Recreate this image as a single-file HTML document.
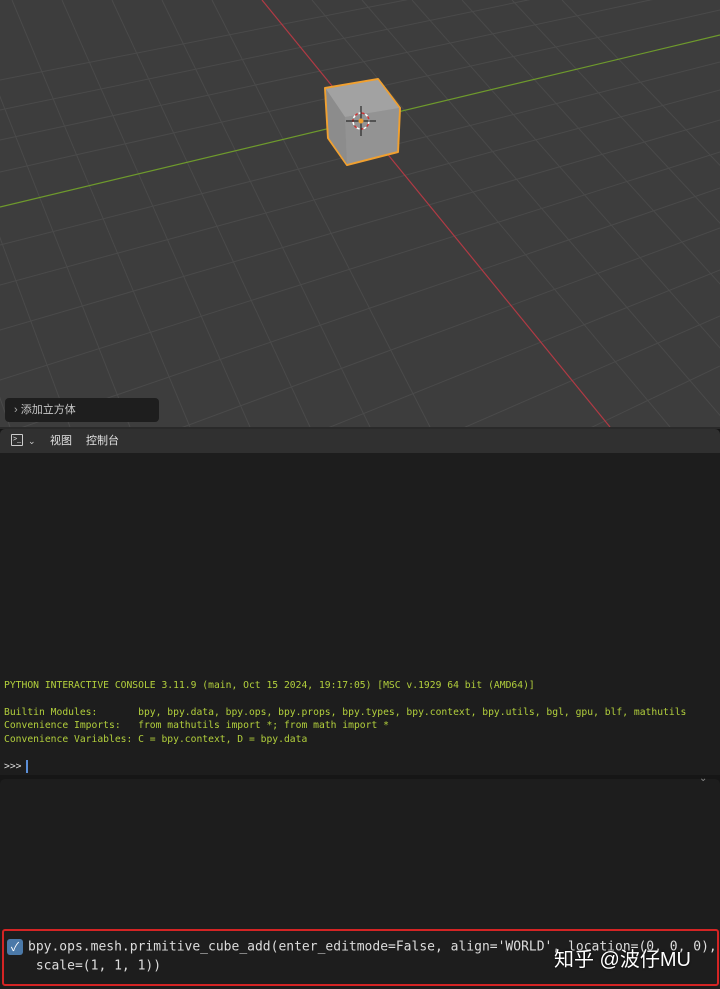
<!DOCTYPE html>
<html><head><meta charset="utf-8"><style>
body{margin:0;width:720px;height:989px;background:#161616;overflow:hidden;position:relative;font-family:"Liberation Sans","Noto Sans CJK SC",sans-serif}
.abs{position:absolute}
.mono{font-family:"DejaVu Sans Mono","Liberation Mono",monospace;font-size:9.7px;color:#b2cf3c;white-space:pre;position:absolute;left:4px}
</style></head><body>
<svg class="abs" style="left:0;top:0" width="720" height="427" viewBox="0 0 720 427">
<rect width="720" height="427" fill="#3d3d3d"/>
<g stroke="#4a4a4a" stroke-width="1">
<line x1="-138" y1="0" x2="10" y2="427"/><line x1="-38" y1="0" x2="130" y2="427"/>
<line x1="12" y1="0" x2="190" y2="427"/><line x1="62" y1="0" x2="250" y2="427"/>
<line x1="112" y1="0" x2="310" y2="427"/><line x1="162" y1="0" x2="370" y2="427"/>
<line x1="212" y1="0" x2="430" y2="427"/><line x1="312" y1="0" x2="670" y2="427"/>
<line x1="362" y1="0" x2="730" y2="427"/><line x1="412" y1="0" x2="790" y2="427"/>
<line x1="462" y1="0" x2="850" y2="427"/><line x1="512" y1="0" x2="910" y2="427"/>
<line x1="-88" y1="0" x2="70" y2="427"/><line x1="562" y1="0" x2="970" y2="427"/>
<line x1="0" y1="110" x2="720" y2="-40"/><line x1="0" y1="140" x2="720" y2="-15"/>
<line x1="0" y1="172" x2="720" y2="10"/><line x1="0" y1="245" x2="720" y2="62"/>
<line x1="0" y1="285" x2="720" y2="90"/><line x1="0" y1="330" x2="720" y2="120"/>
<line x1="0" y1="380" x2="720" y2="152"/><line x1="0" y1="435" x2="720" y2="188"/>
<line x1="0" y1="495" x2="720" y2="228"/><line x1="0" y1="560" x2="720" y2="270"/>
<line x1="0" y1="630" x2="720" y2="316"/><line x1="0" y1="710" x2="720" y2="366"/>
<line x1="0" y1="80" x2="720" y2="-62"/>
</g>
<line x1="262" y1="0" x2="610" y2="427" stroke="#b03a44" stroke-width="1.2"/>
<line x1="0" y1="207" x2="720" y2="35" stroke="#6e9a2c" stroke-width="1.2"/>
<path d="M325 88 L378 79 L400 108 L398 152 L347 165 L328 138 Z" fill="#9a9a9a" stroke="#f0a030" stroke-width="2" stroke-linejoin="round"/>
<path d="M326 89 L378 80 L399 108 L345 117 Z" fill="#a2a2a2"/>
<path d="M345 117 L399 108 L397 151 L347 164 Z" fill="#939393"/>
<path d="M326 89 L345 117 L347 164 L329 138 Z" fill="#8c8c8c"/>
<circle cx="361" cy="121" r="8" fill="none" stroke="#fff" stroke-width="1.5" stroke-dasharray="4 3"/>
<circle cx="361" cy="121" r="8" fill="none" stroke="#c33" stroke-width="1.5" stroke-dasharray="3 4" stroke-dashoffset="4"/>
<line x1="346" y1="121" x2="376" y2="121" stroke="#111"/><line x1="361" y1="106" x2="361" y2="136" stroke="#111"/>
<circle cx="361" cy="121" r="2.5" fill="#f0a030"/>
</svg>
<div class="abs" style="left:5px;top:398px;width:154px;height:24px;background:#1e1e1e;border-radius:4px;color:#c8c8c8;font-size:11px;line-height:24px"><span style="margin-left:9px;color:#aaa">›</span>&nbsp;添加立方体</div>
<div class="abs" style="left:0;top:427px;width:720px;height:2px;background:#2a2a2a"></div>
<div class="abs" style="left:0;top:429px;width:720px;height:24px;background:#303030;border-radius:5px 5px 0 0;color:#e0e0e0;font-size:11px;line-height:24px">
<span class="abs" style="left:11px;top:5px;width:12px;height:12px;border:1px solid #ccc;border-radius:1px;font-size:7px;line-height:10px;text-align:left;padding-left:1px;box-sizing:border-box">&gt;_</span>
<span class="abs" style="left:28px;top:0;font-size:9px;color:#ccc">⌄</span>
<span class="abs" style="left:50px">视图</span><span class="abs" style="left:86px">控制台</span></div>
<div class="abs" style="left:0;top:453px;width:720px;height:322px;background:#1d1d1d"></div>
<div class="mono" style="top:680px">PYTHON INTERACTIVE CONSOLE 3.11.9 (main, Oct 15 2024, 19:17:05) [MSC v.1929 64 bit (AMD64)]</div>
<div class="mono" style="top:707px">Builtin Modules:       bpy, bpy.data, bpy.ops, bpy.props, bpy.types, bpy.context, bpy.utils, bgl, gpu, blf, mathutils</div>
<div class="mono" style="top:720px">Convenience Imports:   from mathutils import *; from math import *</div>
<div class="mono" style="top:734px">Convenience Variables: C = bpy.context, D = bpy.data</div>
<div class="mono" style="top:761px;color:#ddd">&gt;&gt;&gt; </div>
<div class="abs" style="left:26px;top:760px;width:2px;height:13px;background:#5b8fd8"></div>
<div class="abs" style="left:0;top:779px;width:720px;height:210px;background:#1d1d1d;border-radius:5px 5px 0 0"></div>
<div class="abs" style="left:699px;top:773px;color:#888;font-size:10px">⌄</div>
<div class="abs" style="left:2px;top:929px;width:713px;height:53px;border:2px solid #d42424;border-radius:3px"></div>
<div class="abs" style="left:7px;top:939px;width:16px;height:16px;background:#4b79a8;border-radius:3px;color:#fff;font-size:12px;line-height:16px;text-align:center">✓</div>
<div class="abs" style="left:28px;top:938px;font-family:'DejaVu Sans Mono','Liberation Mono',monospace;font-size:13px;color:#ddd;white-space:pre;line-height:18px;transform:scaleY(1.05);transform-origin:0 0">bpy.ops.mesh.primitive_cube_add(enter_editmode=False, align='WORLD', location=(0, 0, 0),
 scale=(1, 1, 1))</div>
<div class="abs" style="left:554px;top:943px;font-size:20px;color:#fff;text-shadow:0 0 2px #000">知乎 @波仔MU</div>
</body></html>
